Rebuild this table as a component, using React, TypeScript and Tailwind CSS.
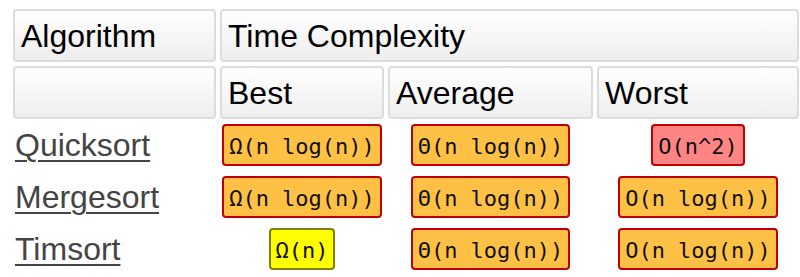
import React from 'react'

type Kind = 'mid' | 'bad' | 'good'

interface Row {
  name: string
  best: [string, Kind]
  avg: [string, Kind]
  worst: [string, Kind]
}

const rows: Row[] = [
  { name: 'Quicksort', best: ['Ω(n log(n))', 'mid'], avg: ['Θ(n log(n))', 'mid'], worst: ['O(n^2)', 'bad'] },
  { name: 'Mergesort', best: ['Ω(n log(n))', 'mid'], avg: ['Θ(n log(n))', 'mid'], worst: ['O(n log(n))', 'mid'] },
  { name: 'Timsort', best: ['Ω(n)', 'good'], avg: ['Θ(n log(n))', 'mid'], worst: ['O(n log(n))', 'mid'] },
]

const kindClass: Record<Kind, string> = {
  mid: 'bg-[#ffc145] border-[#c00000]',
  bad: 'bg-[#ff8585] border-[#c00000]',
  good: 'bg-[#ffff00] border-[#808000]',
}

function Badge({ value }: { value: [string, Kind] }) {
  const [text, kind] = value
  return (
    <span
      className={`h-[42px] flex items-center pt-[2px] px-[5px] border-2 rounded-[4px] text-[22px] text-[#111111] whitespace-pre ${kindClass[kind]}`}
      style={{ fontFamily: '"DejaVu Sans Mono", monospace' }}
    >
      {text}
    </span>
  )
}

function Head({ children, span }: { children?: React.ReactNode; span?: boolean }) {
  return (
    <div
      className={`h-[53px] flex items-center px-[6px] border-2 border-[#dcdcdc] rounded-[4px] bg-gradient-to-b from-white to-[#eeeeee] text-black ${span ? 'col-span-3' : ''}`}
    >
      {children}
    </div>
  )
}

export default function App() {
  return (
    <div
      className="w-[800px] h-[277px] bg-white pt-[9px] pl-[13px] overflow-hidden text-[32px]"
      style={{ fontFamily: '"Liberation Sans", Arial, sans-serif' }}
    >
      <div className="grid grid-cols-[203px_164px_205px_202px] gap-[4px]">
        <Head>Algorithm</Head>
        <Head span>Time Complexity</Head>
        <Head />
        <Head>Best</Head>
        <Head>Average</Head>
        <Head>Worst</Head>
      </div>

      <div className="grid grid-cols-[203px_164px_205px_202px] gap-x-[4px] gap-y-[8px] mt-[4px]">
        {rows.map((r) => (
          <React.Fragment key={r.name}>
            <div className="h-[44px] flex items-center pl-[2px]">
              <a href="#" className="text-[#444444] underline decoration-2 underline-offset-[4px]">
                {r.name}
              </a>
            </div>
            <div className="h-[44px] flex items-center justify-center">
              <Badge value={r.best} />
            </div>
            <div className="h-[44px] flex items-center justify-center">
              <Badge value={r.avg} />
            </div>
            <div className="h-[44px] flex items-center justify-center">
              <Badge value={r.worst} />
            </div>
          </React.Fragment>
        ))}
      </div>
    </div>
  )
}
